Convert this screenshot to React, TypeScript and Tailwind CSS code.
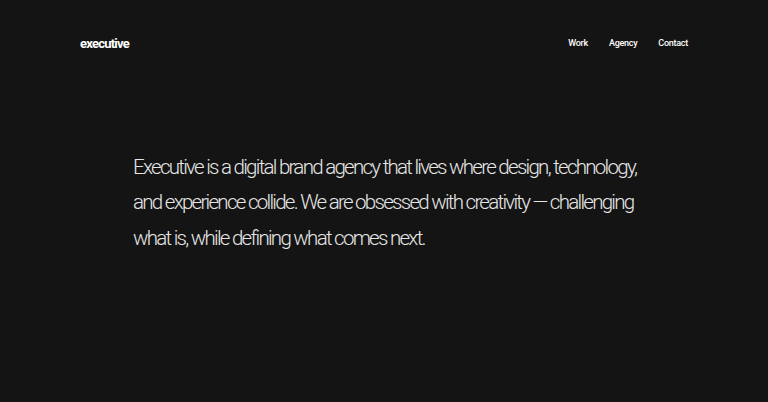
export default function App() {
  return (
    <div className="min-h-[402px] w-full bg-[#141414] text-[#e6e6e6]" style={{ fontFamily: 'Roboto, "Liberation Sans", sans-serif' }}>
      <header className="flex items-center justify-between pl-[80px] pr-[80px] pt-[34px]">
        <div className="text-[13px] font-bold tracking-[-0.06em] text-white">executive</div>
        <nav className="flex items-center gap-[21px] text-[9px] font-medium tracking-[-0.03em] text-white">
          <span>Work</span>
          <span>Agency</span>
          <span>Contact</span>
        </nav>
      </header>
      <main className="pl-[133px] pt-[96px]">
        <p className="whitespace-nowrap text-[20.5px] font-light leading-[35.5px] tracking-[-0.084em] text-[#e6e6e6]">
          Executive is a digital brand agency that lives where design, technology,
          <br />
          and experience collide. We are obsessed with creativity — challenging
          <br />
          what is, while defining what comes next.
        </p>
      </main>
    </div>
  );
}
